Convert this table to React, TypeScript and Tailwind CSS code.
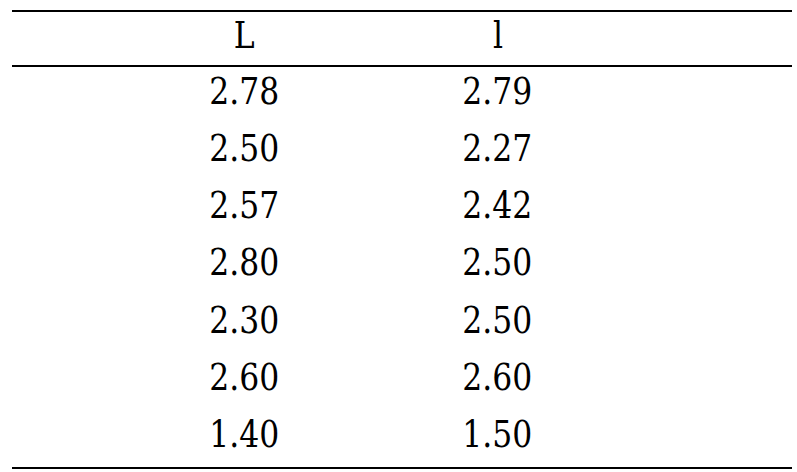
import React from 'react'

const rows: [string, string][] = [
  ['2.78', '2.79'],
  ['2.50', '2.27'],
  ['2.57', '2.42'],
  ['2.80', '2.50'],
  ['2.30', '2.50'],
  ['2.60', '2.60'],
  ['1.40', '1.50'],
]

const Cell = ({ children }: { children: React.ReactNode }) => (
  <div className="w-[253px] flex justify-center">
    <span className="inline-block scale-x-[0.85]">{children}</span>
  </div>
)

const App: React.FC = () => {
  return (
    <div
      className="w-[797px] h-[472px] bg-white text-black pt-[10px] pl-[12px] pr-[5px]"
      style={{ fontFamily: '"DejaVu Serif", serif' }}
    >
      <div className="text-[37px] leading-none">
        <div className="border-t-2 border-b-2 border-black h-[57px] flex items-center pl-[106px] pb-[6px]">
          <Cell>L</Cell>
          <Cell>l</Cell>
        </div>
        <div className="border-b-2 border-black">
          {rows.map(([a, b], i) => (
            <div key={i} className="h-[57.14px] flex items-center pl-[106px] pb-[8px]">
              <Cell>{a}</Cell>
              <Cell>{b}</Cell>
            </div>
          ))}
        </div>
      </div>
    </div>
  )
}

export default App
